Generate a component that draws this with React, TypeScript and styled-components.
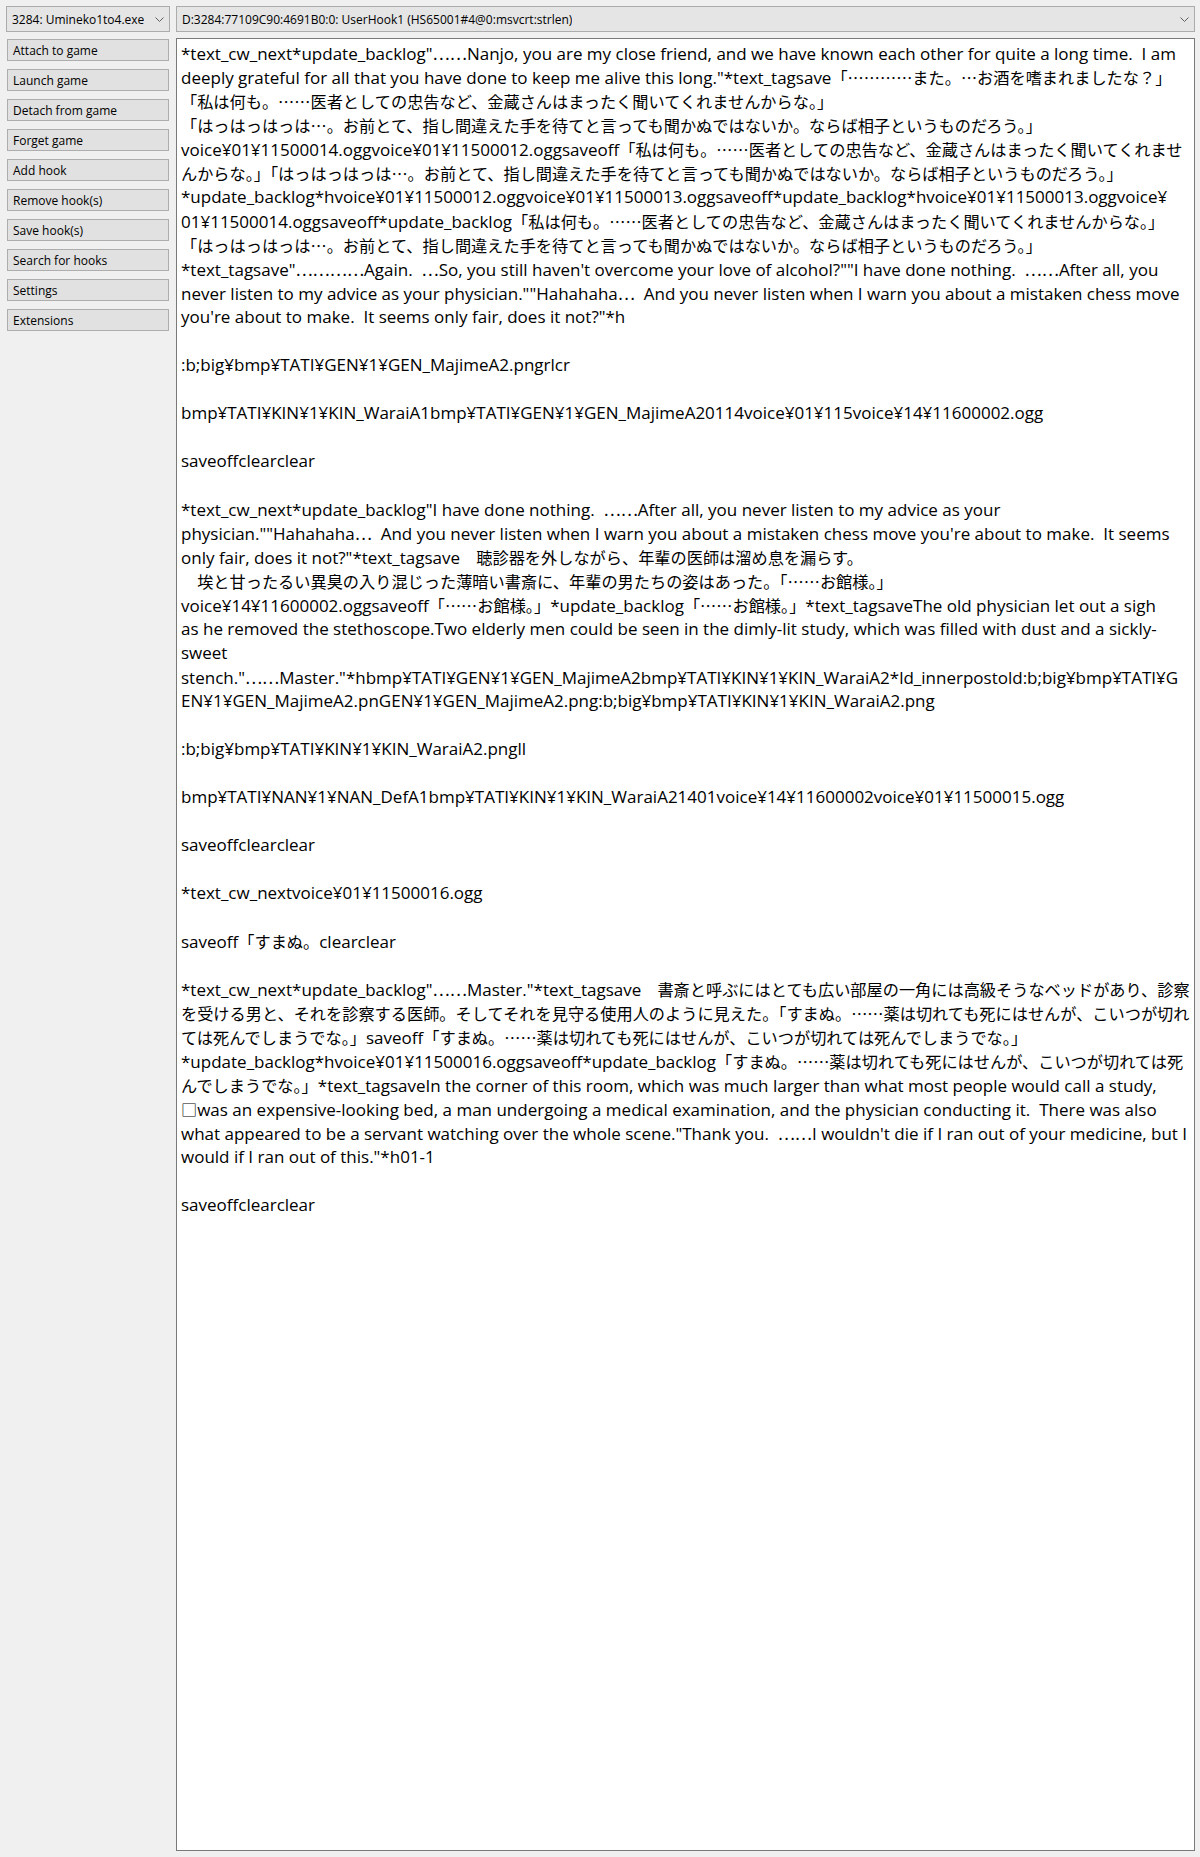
import React from "react";
import styled, { createGlobalStyle } from "styled-components";

const actions = [
  "Attach to game",
  "Launch game",
  "Detach from game",
  "Forget game",
  "Add hook",
  "Remove hook(s)",
  "Save hook(s)",
  "Search for hooks",
  "Settings",
  "Extensions",
];

const lines = [
  `*text_cw_next*update_backlog"……Nanjo, you are my close friend, and we have known each other for quite a long time.  I am`,
  `deeply grateful for all that you have done to keep me alive this long."*text_tagsave「…………また。…お酒を嗜まれましたな？」`,
  `「私は何も。……医者としての忠告など、金蔵さんはまったく聞いてくれませんからな。」`,
  `「はっはっはっは…。お前とて、指し間違えた手を待てと言っても聞かぬではないか。ならば相子というものだろう。」`,
  `voice¥01¥11500014.oggvoice¥01¥11500012.oggsaveoff「私は何も。……医者としての忠告など、金蔵さんはまったく聞いてくれませ`,
  `んからな。」「はっはっはっは…。お前とて、指し間違えた手を待てと言っても聞かぬではないか。ならば相子というものだろう。」`,
  `*update_backlog*hvoice¥01¥11500012.oggvoice¥01¥11500013.oggsaveoff*update_backlog*hvoice¥01¥11500013.oggvoice¥`,
  `01¥11500014.oggsaveoff*update_backlog「私は何も。……医者としての忠告など、金蔵さんはまったく聞いてくれませんからな。」`,
  `「はっはっはっは…。お前とて、指し間違えた手を待てと言っても聞かぬではないか。ならば相子というものだろう。」`,
  `*text_tagsave"…………Again.  …So, you still haven't overcome your love of alcohol?""I have done nothing.  ……After all, you`,
  `never listen to my advice as your physician.""Hahahaha…  And you never listen when I warn you about a mistaken chess move`,
  `you're about to make.  It seems only fair, does it not?"*h`,
  ``,
  `:b;big¥bmp¥TATI¥GEN¥1¥GEN_MajimeA2.pngrlcr`,
  ``,
  `bmp¥TATI¥KIN¥1¥KIN_WaraiA1bmp¥TATI¥GEN¥1¥GEN_MajimeA20114voice¥01¥115voice¥14¥11600002.ogg`,
  ``,
  `saveoffclearclear`,
  ``,
  `*text_cw_next*update_backlog"I have done nothing.  ……After all, you never listen to my advice as your`,
  `physician.""Hahahaha…  And you never listen when I warn you about a mistaken chess move you're about to make.  It seems`,
  `only fair, does it not?"*text_tagsave　聴診器を外しながら、年輩の医師は溜め息を漏らす。`,
  `　埃と甘ったるい異臭の入り混じった薄暗い書斎に、年輩の男たちの姿はあった。「……お館様。」`,
  `voice¥14¥11600002.oggsaveoff「……お館様。」*update_backlog「……お館様。」*text_tagsaveThe old physician let out a sigh`,
  `as he removed the stethoscope.Two elderly men could be seen in the dimly-lit study, which was filled with dust and a sickly-`,
  `sweet`,
  `stench."……Master."*hbmp¥TATI¥GEN¥1¥GEN_MajimeA2bmp¥TATI¥KIN¥1¥KIN_WaraiA2*ld_innerpostold:b;big¥bmp¥TATI¥G`,
  `EN¥1¥GEN_MajimeA2.pnGEN¥1¥GEN_MajimeA2.png:b;big¥bmp¥TATI¥KIN¥1¥KIN_WaraiA2.png`,
  ``,
  `:b;big¥bmp¥TATI¥KIN¥1¥KIN_WaraiA2.pngll`,
  ``,
  `bmp¥TATI¥NAN¥1¥NAN_DefA1bmp¥TATI¥KIN¥1¥KIN_WaraiA21401voice¥14¥11600002voice¥01¥11500015.ogg`,
  ``,
  `saveoffclearclear`,
  ``,
  `*text_cw_nextvoice¥01¥11500016.ogg`,
  ``,
  `saveoff「すまぬ。clearclear`,
  ``,
  `*text_cw_next*update_backlog"……Master."*text_tagsave　書斎と呼ぶにはとても広い部屋の一角には高級そうなベッドがあり、診察`,
  `を受ける男と、それを診察する医師。そしてそれを見守る使用人のように見えた。「すまぬ。……薬は切れても死にはせんが、こいつが切れ`,
  `ては死んでしまうでな。」saveoff「すまぬ。……薬は切れても死にはせんが、こいつが切れては死んでしまうでな。」`,
  `*update_backlog*hvoice¥01¥11500016.oggsaveoff*update_backlog「すまぬ。……薬は切れても死にはせんが、こいつが切れては死`,
  `んでしまうでな。」*text_tagsaveIn the corner of this room, which was much larger than what most people would call a study,`,
  `□was an expensive-looking bed, a man undergoing a medical examination, and the physician conducting it.  There was also`,
  `what appeared to be a servant watching over the whole scene."Thank you.  ……I wouldn't die if I ran out of your medicine, but I`,
  `would if I ran out of this."*h01-1`,
  ``,
  `saveoffclearclear`,
];

// full-width runs (kana, kanji, brackets, ellipsis) get the CJK face
const wideRun = /([\u2026\u25a1\u3000-\u30ff\u3400-\u9fff\uff00-\uff60]+)/;

function Chevron() {
  return (
    <svg width="9" height="5" viewBox="0 0 9 5">
      <polyline points="0.5,0.5 4.5,4.5 8.5,0.5" fill="none" stroke="#5f5f5f" strokeWidth="1" />
    </svg>
  );
}

function LogLine({ text }: { text: string }) {
  const parts = text.split(wideRun);
  return (
    <Line>
      {parts.map((part, i) =>
        i % 2 === 1 ? <Wide key={i}>{part}</Wide> : part
      )}
    </Line>
  );
}

function App() {
  return (
    <>
      <GlobalStyle />
      <Window>
        <Sidebar>
          <Combo>
            <span>3284: Umineko1to4.exe</span>
            <Chevron />
          </Combo>
          <ButtonList>
            {actions.map((label) => (
              <ActionButton key={label}>{label}</ActionButton>
            ))}
          </ButtonList>
        </Sidebar>
        <Main>
          <Combo>
            <span>D:3284:77109C90:4691B0:0: UserHook1 (HS65001#4@0:msvcrt:strlen)</span>
            <Chevron />
          </Combo>
          <TextBox>
            {lines.map((text, i) => (
              <LogLine key={i} text={text} />
            ))}
          </TextBox>
        </Main>
      </Window>
    </>
  );
}

const GlobalStyle = createGlobalStyle`
  html, body {
    margin: 0;
    padding: 0;
    background: #f0f0f0;
  }
  * {
    box-sizing: border-box;
  }
`;

const Window = styled.div`
  display: grid;
  grid-template-columns: 164px 1fr;
  column-gap: 6px;
  width: 1200px;
  height: 1857px;
  padding: 6px;
  background: #f0f0f0;
  font-family: "Open Sans", "Noto Sans CJK JP", sans-serif;
  color: #000;
`;

const Sidebar = styled.div`
  display: flex;
  flex-direction: column;
`;

const Main = styled.div`
  display: flex;
  flex-direction: column;
  gap: 6px;
  min-height: 0;
`;

const Combo = styled.div`
  display: flex;
  align-items: center;
  justify-content: space-between;
  height: 26px;
  padding: 0 5px 0 5px;
  background: #e5e5e5;
  border: 1px solid #acacac;
  font-size: 12px;
  white-space: nowrap;
  span {
    overflow: hidden;
  }
  svg {
    flex-shrink: 0;
    margin-left: 6px;
  }
`;

const ButtonList = styled.div`
  display: flex;
  flex-direction: column;
  gap: 8px;
  margin-top: 7px;
  padding: 0 1px;
`;

const ActionButton = styled.div`
  display: flex;
  align-items: center;
  height: 22px;
  padding: 0 5px;
  background: #e1e1e1;
  border: 1px solid #adadad;
  font-size: 12px;
  white-space: nowrap;
`;

const TextBox = styled.div`
  flex: 1;
  background: #fff;
  border: 1px solid #7a7a7a;
  padding: 2px 4px;
  overflow: hidden;
  font-size: 17px;
`;

const Line = styled.div`
  height: 24px;
  line-height: 24px;
  white-space: pre;
`;

const Wide = styled.span`
  font-family: "Noto Sans CJK JP", sans-serif;
  font-size: 16.2px;
`;

export default App;
